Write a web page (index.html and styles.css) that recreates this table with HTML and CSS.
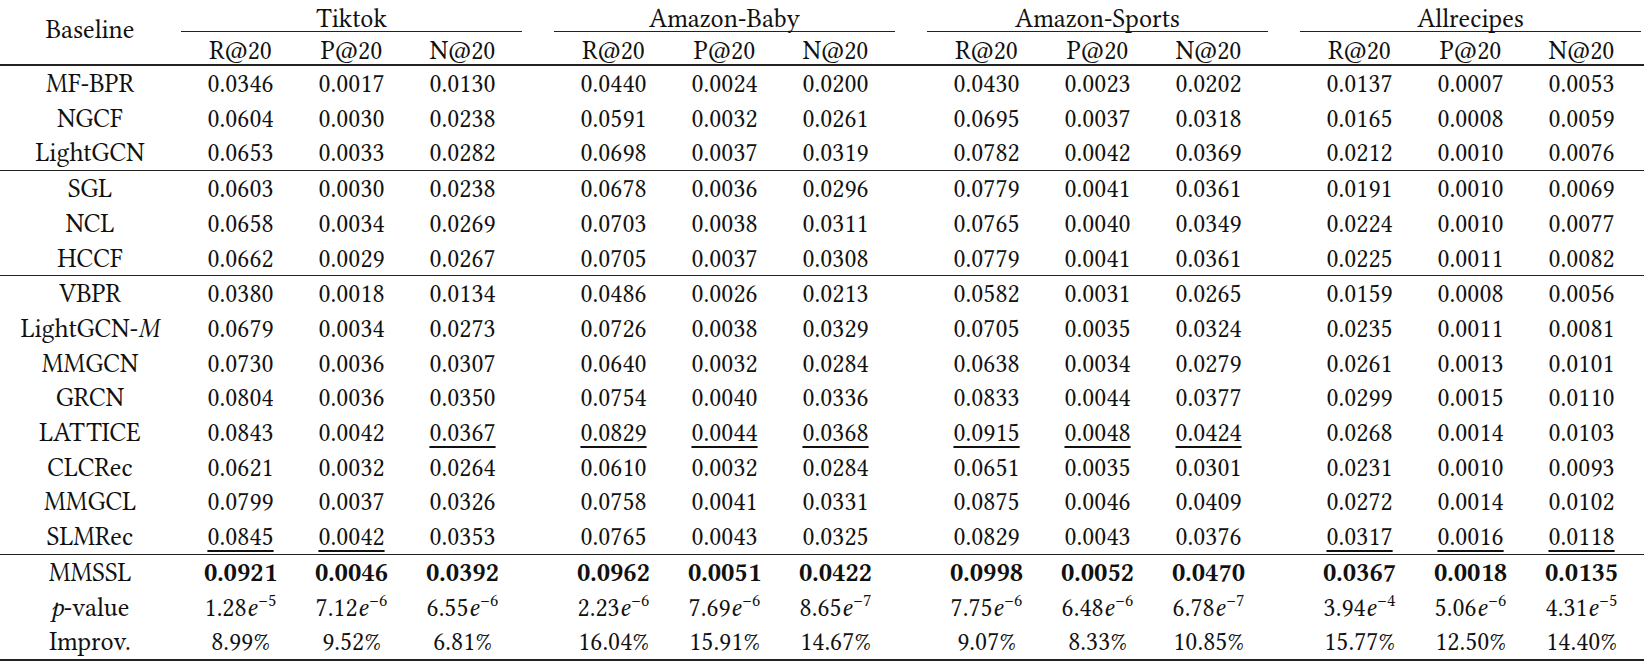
FILE: index.html
```html
<!DOCTYPE html>
<html lang="en">
<head>
<meta charset="utf-8">
<title>Performance comparison</title>
<link rel="stylesheet" href="styles.css">
</head>
<body>
<table class="results">
  <colgroup>
    <col class="c-base">
    <col class="c-d"><col class="c-d"><col class="c-d">
    <col class="c-ds"><col class="c-d"><col class="c-d">
    <col class="c-ds"><col class="c-d"><col class="c-d">
    <col class="c-ds"><col class="c-d"><col class="c-de">
  </colgroup>
  <thead>
    <tr class="h1">
      <th class="base" rowspan="2">Baseline</th>
      <th colspan="3"><div class="cmid">Tiktok</div></th>
      <th colspan="3" class="gs"><div class="cmid">Amazon-Baby</div></th>
      <th colspan="3" class="gs"><div class="cmid">Amazon-Sports</div></th>
      <th colspan="3" class="gs ge"><div class="cmid">Allrecipes</div></th>
    </tr>
    <tr class="h2">
      <th>R@20</th><th>P@20</th><th>N@20</th>
      <th class="gs">R@20</th><th>P@20</th><th>N@20</th>
      <th class="gs">R@20</th><th>P@20</th><th>N@20</th>
      <th class="gs">R@20</th><th>P@20</th><th class="ge">N@20</th>
    </tr>
  </thead>
  <tbody>
    <tr><td>MF-BPR</td><td>0.0346</td><td>0.0017</td><td>0.0130</td><td>0.0440</td><td>0.0024</td><td>0.0200</td><td>0.0430</td><td>0.0023</td><td>0.0202</td><td>0.0137</td><td>0.0007</td><td>0.0053</td></tr>
    <tr><td>NGCF</td><td>0.0604</td><td>0.0030</td><td>0.0238</td><td>0.0591</td><td>0.0032</td><td>0.0261</td><td>0.0695</td><td>0.0037</td><td>0.0318</td><td>0.0165</td><td>0.0008</td><td>0.0059</td></tr>
    <tr><td>LightGCN</td><td>0.0653</td><td>0.0033</td><td>0.0282</td><td>0.0698</td><td>0.0037</td><td>0.0319</td><td>0.0782</td><td>0.0042</td><td>0.0369</td><td>0.0212</td><td>0.0010</td><td>0.0076</td></tr>
  </tbody>
  <tbody>
    <tr><td>SGL</td><td>0.0603</td><td>0.0030</td><td>0.0238</td><td>0.0678</td><td>0.0036</td><td>0.0296</td><td>0.0779</td><td>0.0041</td><td>0.0361</td><td>0.0191</td><td>0.0010</td><td>0.0069</td></tr>
    <tr><td>NCL</td><td>0.0658</td><td>0.0034</td><td>0.0269</td><td>0.0703</td><td>0.0038</td><td>0.0311</td><td>0.0765</td><td>0.0040</td><td>0.0349</td><td>0.0224</td><td>0.0010</td><td>0.0077</td></tr>
    <tr><td>HCCF</td><td>0.0662</td><td>0.0029</td><td>0.0267</td><td>0.0705</td><td>0.0037</td><td>0.0308</td><td>0.0779</td><td>0.0041</td><td>0.0361</td><td>0.0225</td><td>0.0011</td><td>0.0082</td></tr>
  </tbody>
  <tbody>
    <tr><td>VBPR</td><td>0.0380</td><td>0.0018</td><td>0.0134</td><td>0.0486</td><td>0.0026</td><td>0.0213</td><td>0.0582</td><td>0.0031</td><td>0.0265</td><td>0.0159</td><td>0.0008</td><td>0.0056</td></tr>
    <tr><td>LightGCN-<i>M</i></td><td>0.0679</td><td>0.0034</td><td>0.0273</td><td>0.0726</td><td>0.0038</td><td>0.0329</td><td>0.0705</td><td>0.0035</td><td>0.0324</td><td>0.0235</td><td>0.0011</td><td>0.0081</td></tr>
    <tr><td>MMGCN</td><td>0.0730</td><td>0.0036</td><td>0.0307</td><td>0.0640</td><td>0.0032</td><td>0.0284</td><td>0.0638</td><td>0.0034</td><td>0.0279</td><td>0.0261</td><td>0.0013</td><td>0.0101</td></tr>
    <tr><td>GRCN</td><td>0.0804</td><td>0.0036</td><td>0.0350</td><td>0.0754</td><td>0.0040</td><td>0.0336</td><td>0.0833</td><td>0.0044</td><td>0.0377</td><td>0.0299</td><td>0.0015</td><td>0.0110</td></tr>
    <tr><td>LATTICE</td><td>0.0843</td><td>0.0042</td><td><span class="ul">0.0367</span></td><td><span class="ul">0.0829</span></td><td><span class="ul">0.0044</span></td><td><span class="ul">0.0368</span></td><td><span class="ul">0.0915</span></td><td><span class="ul">0.0048</span></td><td><span class="ul">0.0424</span></td><td>0.0268</td><td>0.0014</td><td>0.0103</td></tr>
    <tr><td>CLCRec</td><td>0.0621</td><td>0.0032</td><td>0.0264</td><td>0.0610</td><td>0.0032</td><td>0.0284</td><td>0.0651</td><td>0.0035</td><td>0.0301</td><td>0.0231</td><td>0.0010</td><td>0.0093</td></tr>
    <tr><td>MMGCL</td><td>0.0799</td><td>0.0037</td><td>0.0326</td><td>0.0758</td><td>0.0041</td><td>0.0331</td><td>0.0875</td><td>0.0046</td><td>0.0409</td><td>0.0272</td><td>0.0014</td><td>0.0102</td></tr>
    <tr><td>SLMRec</td><td><span class="ul">0.0845</span></td><td><span class="ul">0.0042</span></td><td>0.0353</td><td>0.0765</td><td>0.0043</td><td>0.0325</td><td>0.0829</td><td>0.0043</td><td>0.0376</td><td><span class="ul">0.0317</span></td><td><span class="ul">0.0016</span></td><td><span class="ul">0.0118</span></td></tr>
  </tbody>
  <tbody class="last">
    <tr class="best"><td>MMSSL</td><td>0.0921</td><td>0.0046</td><td>0.0392</td><td>0.0962</td><td>0.0051</td><td>0.0422</td><td>0.0998</td><td>0.0052</td><td>0.0470</td><td>0.0367</td><td>0.0018</td><td>0.0135</td></tr>
    <tr><td><i>p</i>-value</td><td>1.28<i>e</i><sup>−5</sup></td><td>7.12<i>e</i><sup>−6</sup></td><td>6.55<i>e</i><sup>−6</sup></td><td>2.23<i>e</i><sup>−6</sup></td><td>7.69<i>e</i><sup>−6</sup></td><td>8.65<i>e</i><sup>−7</sup></td><td>7.75<i>e</i><sup>−6</sup></td><td>6.48<i>e</i><sup>−6</sup></td><td>6.78<i>e</i><sup>−7</sup></td><td>3.94<i>e</i><sup>−4</sup></td><td>5.06<i>e</i><sup>−6</sup></td><td>4.31<i>e</i><sup>−5</sup></td></tr>
    <tr><td>Improv.</td><td>8.99%</td><td>9.52%</td><td>6.81%</td><td>16.04%</td><td>15.91%</td><td>14.67%</td><td>9.07%</td><td>8.33%</td><td>10.85%</td><td>15.77%</td><td>12.50%</td><td>14.40%</td></tr>
  </tbody>
</table>
</body>
</html>
```

FILE: styles.css
```css
html, body {
  margin: 0;
  padding: 0;
  background: #ffffff;
}

body {
  width: 1644px;
  height: 663px;
  overflow: hidden;
  font-family: "Linux Libertine O", "Linux Libertine", "Libertinus Serif", "Liberation Serif", "Tinos", "DejaVu Serif", "Noto Serif", "FreeSerif", "Nimbus Roman", "Nimbus Roman No9 L", "Times New Roman", Times, Georgia, serif;
  font-size: 26px;
  color: #111111;
}

.results {
  width: 1644px;
  table-layout: fixed;
  border-collapse: separate;
  border-spacing: 0;
  font-family: inherit;
  font-size: inherit;
}

.c-base { width: 185px; }
.c-d    { width: 111px; }
.c-ds   { width: 151px; }
.c-de   { width: 118px; }

.results th,
.results td {
  padding: 0;
  text-align: center;
  font-weight: normal;
  white-space: nowrap;
}

/* first column */
.results th.base,
.results tbody td:first-child {
  padding-right: 5px;
}

/* group start / end padding (inter-group gap) */
.results .gs,
.results tbody td:nth-child(5),
.results tbody td:nth-child(8),
.results tbody td:nth-child(11) {
  padding-left: 40px;
}

.results .ge,
.results tbody td:nth-child(13) {
  padding-right: 7px;
}

/* header */
.h1 th {
  height: 32px;
  vertical-align: bottom;
}

.cmid {
  margin: 0 -4px;
  padding-bottom: 0;
  line-height: 24px;
  border-bottom: 1px solid #222222;
}

.h2 th {
  height: 26px;
  padding-top: 6px;
  line-height: 26px;
  border-bottom: 2px solid #222222;
}

.h1 th.base {
  vertical-align: middle;
  border-bottom: 2px solid #222222;
  line-height: 26px;
  padding-bottom: 5px;
}

/* body */
.results tbody td {
  height: 32.7px;
  padding-top: 2px;
  line-height: 32.7px;
}

.results tbody + tbody tr:first-child td {
  border-top: 1px solid #222222;
}

.results tbody.last tr:last-child td {
  border-bottom: 2px solid #222222;
}

.results tr.best td + td {
  font-weight: bold;
}

.ul {
  text-decoration: underline;
  text-decoration-thickness: 1.5px;
  text-underline-offset: 5px;
}

.results sup {
  font-size: 0.7em;
  line-height: 0;
  vertical-align: 0.55em;
  margin-left: 1px;
}
```
